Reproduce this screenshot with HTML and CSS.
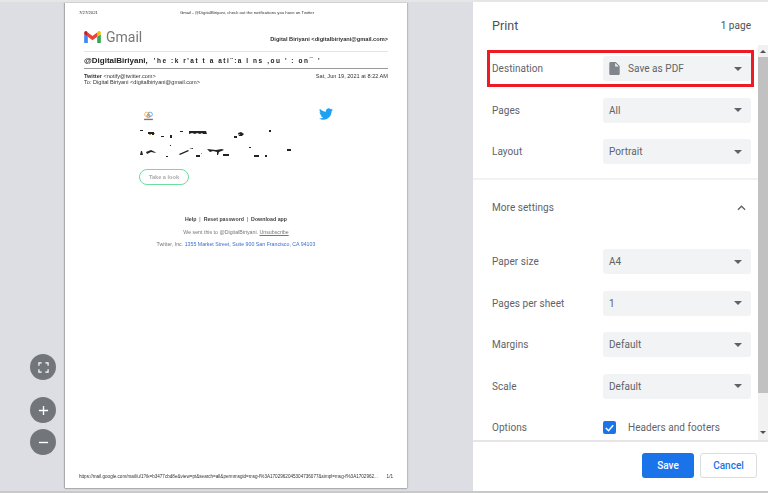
FILE: index.html
```html
<!DOCTYPE html>
<html lang="en">
<head>
<meta charset="utf-8">
<title>Print</title>
<link rel="stylesheet" href="styles.css">
</head>
<body>
<div class="app">
  <main class="preview">
    <article class="sheet">
      <div class="sheet-head"><span>7/27/2021</span><span class="sheet-title">Gmail - @DigitalBiriyani, check out the notifications you have on Twitter</span></div>
      <div class="mail">
        <div class="brand">
          <div class="logo">
            <svg class="gmail-icon" viewBox="0 0 32 24" aria-hidden="true">
              <path fill="#4285f4" d="M2 24h5V11L0 6v16c0 1.1.9 2 2 2z"/>
              <path fill="#34a853" d="M25 24h5c1.1 0 2-.9 2-2V6l-7 5z"/>
              <path fill="#fbbc04" d="M25 3v8l7-5V3.5C32 .8 29 -.8 26.800 .9z"/>
              <path fill="#ea4335" d="M7 11V3l9 6.800L25 3v8l-9 6.800z"/>
              <path fill="#c5221f" d="M0 3.500V6l7 5V3L5.200 .9C3 -.8 0 .8 0 3.500z"/>
            </svg>
            <span class="gmail-word">Gmail</span>
          </div>
          <b class="account">Digital Biriyani &lt;digitalbiriyani@gmail.com&gt;</b>
        </div>
        <h1 class="subject"><b>@DigitalBiriyani,</b><span class="subject-rest">&#39;he :k r&#39;at t a ati&#168;:a l ns ,ou &#39; : on&#175; &#39;</span></h1>
        <div class="meta">
          <div class="meta-from"><div><b>Twitter</b> &lt;notify@twitter.com&gt;</div><div>To: Digital Biriyani &lt;digitalbiriyani@gmail.com&gt;</div></div>
          <div>Sat, Jun 19, 2021 at 8:22 AM</div>
        </div>
        <div class="tweet">
          <div class="tweet-top">
            <svg class="db-logo" viewBox="0 0 20 18" aria-hidden="true">
              <circle cx="7" cy="6" r="4" fill="none" stroke="#f2b632" stroke-width="1.500"/>
              <circle cx="13" cy="6" r="4" fill="none" stroke="#4aa3df" stroke-width="1.500"/>
              <circle cx="10" cy="9" r="3" fill="none" stroke="#d9534f" stroke-width="1.200"/>
              <rect x="2" y="14" width="16" height="2.500" fill="#777"/>
            </svg>
            <svg class="bird" viewBox="0 0 24 24" aria-hidden="true"><path fill="#1da1f2" d="M23.950 4.570a10 10 0 0 1-2.820.77 4.960 4.960 0 0 0 2.160-2.720c-.95.550-2 .96-3.130 1.190a4.920 4.920 0 0 0-8.380 4.480C7.690 8.090 4.070 6.130 1.640 3.160a4.820 4.820 0 0 0-.67 2.480c0 1.710.87 3.210 2.190 4.100a4.900 4.900 0 0 1-2.230-.62v.06a4.920 4.920 0 0 0 3.950 4.830 5 5 0 0 1-2.210.08 4.940 4.940 0 0 0 4.610 3.420A9.870 9.870 0 0 1 0 19.540a14 14 0 0 0 7.560 2.210c9.050 0 14-7.500 14-13.980 0-.21 0-.42-.02-.63a9.940 9.940 0 0 0 2.410-2.550z"/></svg>
          </div>
          <svg class="specks" viewBox="0 0 155 30" aria-hidden="true">
            <g fill="#222">
              <rect x="1" y="0" width="3" height="1"/><rect x="9" y="2" width="6" height="2"/><rect x="13" y="4" width="2" height="1"/>
              <rect x="22" y="6" width="3" height="1"/><rect x="31" y="5" width="2" height="3"/><rect x="41" y="1" width="3" height="1"/>
              <path d="M50 1h17l1 3h-4l-1-1-2 1-3-1-2 1-3-1-3 1z"/><rect x="95" y="6" width="3" height="2"/><path d="M99 3l3-1 3 2-2 2h-3z"/>
              <rect x="130" y="0" width="2" height="2"/>
              <path d="M1 25l1-4h1l1 4zM7 22l5-2 4 2 1 1-5-1-4 2z"/><rect x="27" y="26" width="2" height="1"/><rect x="31" y="15" width="1" height="1"/>
              <path d="M40 24l9-4 1 1-9 4zM50 19l4-1v1z"/><rect x="57" y="25" width="4" height="2"/>
              <path d="M68 19l9 1 6-1 2 1-5 2-1 3h-1v-3l-4-1-3 1z"/><rect x="84" y="24" width="6" height="2"/><rect x="110" y="17" width="2" height="1"/>
              <rect x="115" y="25" width="5" height="2"/><rect x="126" y="25" width="2" height="2"/><rect x="148" y="19" width="4" height="2"/>
            </g>
            <g fill="#c98a3a"><rect x="15" y="3" width="1" height="1"/><rect x="10" y="4" width="2" height="1"/><rect x="100" y="4" width="1" height="1"/><rect x="62" y="23" width="1" height="1"/></g>
          </svg>
          <div class="look">Take a look</div>
        </div>
        <footer class="mail-foot">
          <div class="foot-links"><b>Help</b> &nbsp;|&nbsp; <b>Reset password</b> &nbsp;|&nbsp; <b>Download app</b></div>
          <div>We sent this to @DigitalBiriyani. <u>Unsubscribe</u></div>
          <div>Twitter, Inc. <span class="addr">1355 Market Street, Suite 900 San Francisco, CA 94103</span></div>
        </footer>
      </div>
      <div class="sheet-foot"><span class="url">https://mail.google.com/mail/u/1?ik=b3477cbd8e&amp;view=pt&amp;search=all&amp;permmsgid=msg-f%3A1702962045304736077&amp;simpl=msg-f%3A1702962...</span><span>1/1</span></div>
    </article>
    <div class="zoom-controls">
      <button class="round fit" aria-label="Fit to page"><svg viewBox="0 0 12 12" aria-hidden="true"><path fill="none" stroke="#fff" stroke-width="1.300" d="M1 4V1h3M8 1h3v3M11 8v3H8M4 11H1V8"/></svg></button>
      <button class="round" aria-label="Zoom in"><svg viewBox="0 0 12 12" aria-hidden="true"><path fill="none" stroke="#fff" stroke-width="1.500" d="M6 1v10M1 6h10"/></svg></button>
      <button class="round" aria-label="Zoom out"><svg viewBox="0 0 12 12" aria-hidden="true"><path fill="none" stroke="#fff" stroke-width="1.500" d="M1 6h10"/></svg></button>
    </div>
  </main>
  <aside class="panel">
    <header class="panel-head"><span class="panel-title">Print</span><span class="count">1 page</span></header>
    <div class="panel-scroll">
      <div class="settings">
        <div class="group">
          <div class="row"><span class="label">Destination</span><div class="select"><svg class="doc" viewBox="4 2 16 20" aria-hidden="true"><path fill="#80868b" d="M6 2c-1.100 0-2 .9-2 2v16c0 1.100.9 2 2 2h12c1.100 0 2-.9 2-2V8l-6-6H6zm7 7V3.500L18.500 9H13z"/></svg><span class="select-text">Save as PDF</span><i class="caret"></i></div></div>
          <div class="row"><span class="label">Pages</span><div class="select"><span class="select-text">All</span><i class="caret"></i></div></div>
          <div class="row"><span class="label">Layout</span><div class="select"><span class="select-text">Portrait</span><i class="caret"></i></div></div>
        </div>
        <div class="more"><span class="label">More settings</span><svg class="chev" viewBox="0 0 10 6" aria-hidden="true"><path fill="none" stroke="#5f6368" stroke-width="1.500" d="M1 5l4-4 4 4"/></svg></div>
        <div class="group lower">
          <div class="row"><span class="label">Paper size</span><div class="select"><span class="select-text">A4</span><i class="caret"></i></div></div>
          <div class="row"><span class="label">Pages per sheet</span><div class="select"><span class="select-text">1</span><i class="caret"></i></div></div>
          <div class="row"><span class="label">Margins</span><div class="select"><span class="select-text">Default</span><i class="caret"></i></div></div>
          <div class="row"><span class="label">Scale</span><div class="select"><span class="select-text">Default</span><i class="caret"></i></div></div>
          <div class="row"><span class="label">Options</span><div class="check-line"><span class="check"><svg viewBox="0 0 12 12" aria-hidden="true"><path fill="none" stroke="#fff" stroke-width="1.600" d="M2 6.500l3 3 5-6"/></svg></span><span class="select-text">Headers and footers</span></div></div>
        </div>
      </div>
      <div class="scrollbar"><i class="arrow up"></i><div class="thumb"></div><i class="arrow down"></i></div>
    </div>
    <footer class="panel-foot"><button class="btn save">Save</button><button class="btn cancel">Cancel</button></footer>
    <div class="highlight"></div>
  </aside>
</div>
</body>
</html>
```
FILE: styles.css
```css
* { box-sizing: border-box; }
html, body { margin: 0; height: 100%; }
body { width: 768px; height: 493px; overflow: hidden; font-family: Roboto, "Liberation Sans", sans-serif; background: #c9c9c9; }
.app { display: flex; height: 491px; border-top: 2px solid #e6e6e6; }

.preview { position: relative; flex: 1; background: #dcdee3; padding: 1px 66px 0 65px; }
.sheet { width: 342px; height: 485px; background: #fff; box-shadow: -1px 0 1px #aaa, 1px 0 1px #bbb, 0 1px 1px #aaa; display: flex; flex-direction: column; color: #333; font-family: "Liberation Sans", Arial, sans-serif; font-size: 5px; filter: blur(.35px); }
.sheet-head { display: flex; padding: 7px 14px 0; height: 21px; font-size: 4.250px; line-height: 6px; }
.sheet-title { margin-left: 82px; }
.mail { flex: 1; padding: 0 19px; display: flex; flex-direction: column; }
.brand { display: flex; justify-content: space-between; align-items: center; height: 28px; padding-top: 1px; border-bottom: 1px solid #e4e4e4; }
.logo { display: flex; align-items: center; gap: 5px; margin-top: -2px; }
.gmail-icon { width: 17px; height: 12.500px; }
.gmail-word { font-family: Roboto, sans-serif; font-size: 14px; color: #777; }
.account { font-size: 5.650px; margin-top: 1px; }
.subject { margin: 0; height: 17px; border-bottom: 1px solid #999; font-size: 8px; font-weight: 400; line-height: 14px; white-space: nowrap; color: #222; padding-top: 2px; }
.subject-rest { margin-left: 6px; font-size: 6.500px; font-weight: 700; letter-spacing: 1.550px; }
.meta { display: flex; justify-content: space-between; padding-top: 4px; font-size: 5.600px; line-height: 6px; height: 38px; }
.tweet { display: flex; flex-direction: column; padding: 0 55px; height: 109px; }
.tweet-top { display: flex; justify-content: space-between; align-items: flex-end; height: 14px; margin-left: 4px; }
.db-logo { width: 11px; height: 10px; }
.bird { width: 14px; height: 14px; }
.specks { width: 155px; height: 30px; margin-top: 9px; flex: none; }
.look { width: 50px; height: 16px; margin-top: 9px; border: 1px solid #6ede9f; border-radius: 8px; color: #aaa; font-size: 5.600px; font-weight: 700; text-align: center; line-height: 14px; }
.mail-foot { display: flex; flex-direction: column; align-items: center; gap: 6.500px; color: #777; font-size: 5.250px; line-height: 6px; }
.foot-links { color: #444; }
.addr { color: #3b6fd4; }
.sheet-foot { display: flex; justify-content: space-between; padding: 0 14px 9px; font-size: 4.600px; line-height: 5px; }
.url { white-space: nowrap; overflow: hidden; width: 305px; }

.zoom-controls { position: absolute; left: 30px; top: 352px; display: flex; flex-direction: column; }
.round { width: 26px; height: 26px; border: 0; padding: 0; border-radius: 50%; background: #72767b; display: flex; align-items: center; justify-content: center; margin-bottom: 6px; }
.round.fit { margin-bottom: 17px; }
.round svg { width: 11px; height: 11px; }

.panel { position: relative; width: 295px; background: #fff; display: flex; flex-direction: column; color: #5f6368; font-size: 10px; letter-spacing: .05px; }
.panel-head { height: 43px; padding: 4px 17px 0 19px; display: flex; justify-content: space-between; align-items: center; }
.panel-title { font-size: 12.500px; color: #4d5156; }
.count { font-size: 10px; color: #4d5156; }
.panel-scroll { flex: 1; display: flex; overflow: hidden; border-bottom: 2px solid #e6e6e6; }
.settings { flex: 1; }
.group { display: flex; flex-direction: column; gap: 16.500px; padding-top: 11px; }
.group.lower { padding-top: 14px; }
.row { display: flex; align-items: center; height: 25px; padding: 0 7px 0 19px; }
.label { flex: 0 0 111px; }
.select { flex: 1; height: 25px; border-radius: 3px; background: #f1f3f4; display: flex; align-items: center; padding: 0 7px 0 6px; }
.select-text { flex: 1; }
.doc { width: 11px; height: 13px; margin-right: 8px; }
.caret { width: 0; height: 0; border: 4px solid transparent; border-top: 4px solid #5f6368; border-bottom: 0; margin-right: 2px; }
.more { margin-top: 14px; height: 57px; border-top: 2px solid #f1f2f3; display: flex; align-items: center; padding: 0 12px 0 19px; justify-content: space-between; }
.more .label { flex: none; }
.chev { width: 9px; height: 6px; }
.check-line { flex: 1; display: flex; align-items: center; gap: 12px; }
.check { width: 13px; height: 13px; border-radius: 2px; background: #1a73e8; display: flex; align-items: center; justify-content: center; }
.check svg { width: 11px; height: 11px; }
.scrollbar { width: 10px; background: #f1f1f1; display: flex; flex-direction: column; align-items: center; }
.arrow { width: 0; height: 0; border: 3px solid transparent; flex: none; }
.arrow.up { border-bottom: 3px solid #505050; border-top: 0; margin: 5px 0 4px; }
.thumb { width: 10px; height: 336px; background: #c1c1c1; flex: none; }
.arrow.down { border-top: 3px solid #505050; border-bottom: 0; margin-top: 38px; }
.panel-foot { height: 49px; display: flex; justify-content: flex-end; gap: 6px; padding: 11px 11px 0 0; }
.btn { height: 25px; border-radius: 3px; font: 500 10px Roboto, sans-serif; }
.save { width: 52px; background: #1a73e8; color: #fff; border: 0; }
.cancel { width: 57px; background: #fff; color: #1a73e8; border: 1px solid #dadce0; }
.highlight { position: absolute; left: 14px; top: 48px; width: 267px; height: 37px; border: 3px solid #ed1c24; pointer-events: none; }
```
